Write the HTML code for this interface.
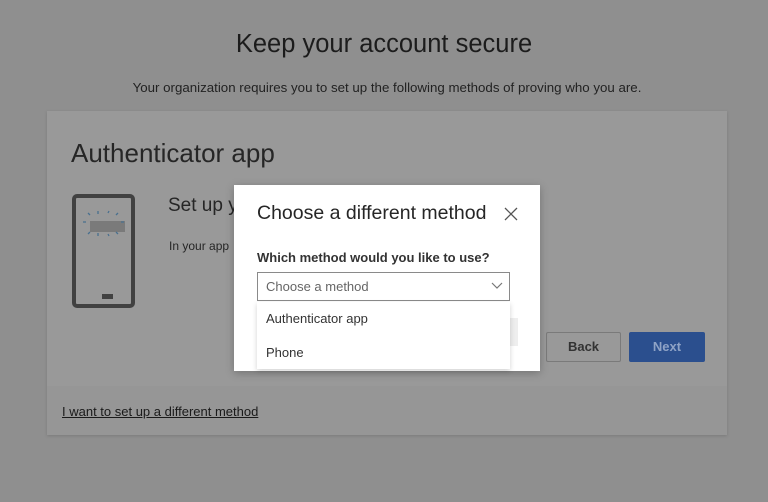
<!DOCTYPE html>
<html><head><style>
body{margin:0;width:768px;height:502px;background:#8f8f8f;font-family:"Liberation Sans",sans-serif;position:relative;overflow:hidden;color:#1e1e1e}
.a{position:absolute}
</style></head><body>
<div class="a" style="left:0;width:768px;top:30px;text-align:center;font-size:25.5px;color:#1c1c1c">Keep your account secure</div>
<div class="a" style="left:0;width:774px;top:80px;text-align:center;font-size:13.3px;color:#222">Your organization requires you to set up the following methods of proving who you are.</div>
<div class="a" style="left:47px;top:111px;width:680px;height:324px;background:#969696;box-shadow:0 1px 3px rgba(0,0,0,.15)"></div>
<div class="a" style="left:47px;top:111px;width:680px;height:275px;background:#999"></div>
<div class="a" style="left:71px;top:138px;font-size:26px;color:#262626">Authenticator app</div>
<div class="a" style="left:72px;top:194px;width:63px;height:114px;border:4px solid #414141;border-radius:5px;box-sizing:border-box"></div>
<div class="a" style="left:90px;top:221px;width:35px;height:11px;background:#7a7a7a"></div>
<div class="a" style="left:102px;top:294px;width:11px;height:5px;background:#414141"></div>
<svg class="a" style="left:80px;top:208px" width="56" height="36" stroke="#49708f" stroke-width="1.3"><path d="M8 5l2 2M18 3v3M29 3l-1 2M38 5l-2 2M3 14h3M44 14h-3M8 26l2-2M18 28v-3M29 28l-1-2M38 26l-2-2"/></svg>
<div class="a" style="left:168px;top:195px;font-size:19px;color:#262626">Set up y</div>
<div class="a" style="left:169px;top:239px;font-size:12px;color:#262626">In your app</div>
<div class="a" style="left:546px;top:332px;width:75px;height:30px;border:1px solid #7a7a7a;box-sizing:border-box;border-radius:2px;text-align:center;line-height:28px;font-size:13px;font-weight:bold;color:#333">Back</div>
<div class="a" style="left:629px;top:332px;width:76px;height:30px;background:#2b4f8e;border-radius:2px;text-align:center;line-height:30px;font-size:13px;font-weight:bold;color:#8fa3c6">Next</div>
<div class="a" style="left:62px;top:404px;font-size:13px;text-decoration:underline;color:#1a1a1a">I want to set up a different method</div>
<div class="a" style="left:234px;top:185px;width:306px;height:186px;background:#fff;box-shadow:0 2px 8px rgba(0,0,0,.25)"></div>
<div class="a" style="left:257px;top:202px;font-size:19.5px;color:#262626">Choose a different method</div>
<svg class="a" style="left:504px;top:207px" width="14" height="14" stroke="#555" stroke-width="1.3"><path d="M1 1l12 12M13 1L1 13"/></svg>
<div class="a" style="left:257px;top:250px;font-size:13px;font-weight:bold;color:#333">Which method would you like to use?</div>
<div class="a" style="left:257px;top:272px;width:253px;height:29px;border:1px solid #8a8a8a;box-sizing:border-box;font-size:13px;color:#666;padding-left:8px;line-height:27px">Choose a method</div>
<svg class="a" style="left:491px;top:282px" width="12" height="8" stroke="#777" stroke-width="1.2" fill="none"><path d="M1 1l5 5 5-5"/></svg>
<div class="a" style="left:510px;top:318px;width:8px;height:28px;background:#eee"></div>
<div class="a" style="left:257px;top:302px;width:253px;height:67px;background:#fff;box-shadow:0 2px 5px rgba(0,0,0,.18)"></div>
<div class="a" style="left:266px;top:311px;font-size:13px;color:#333">Authenticator app</div>
<div class="a" style="left:266px;top:345px;font-size:13px;color:#333">Phone</div>
</body></html>
